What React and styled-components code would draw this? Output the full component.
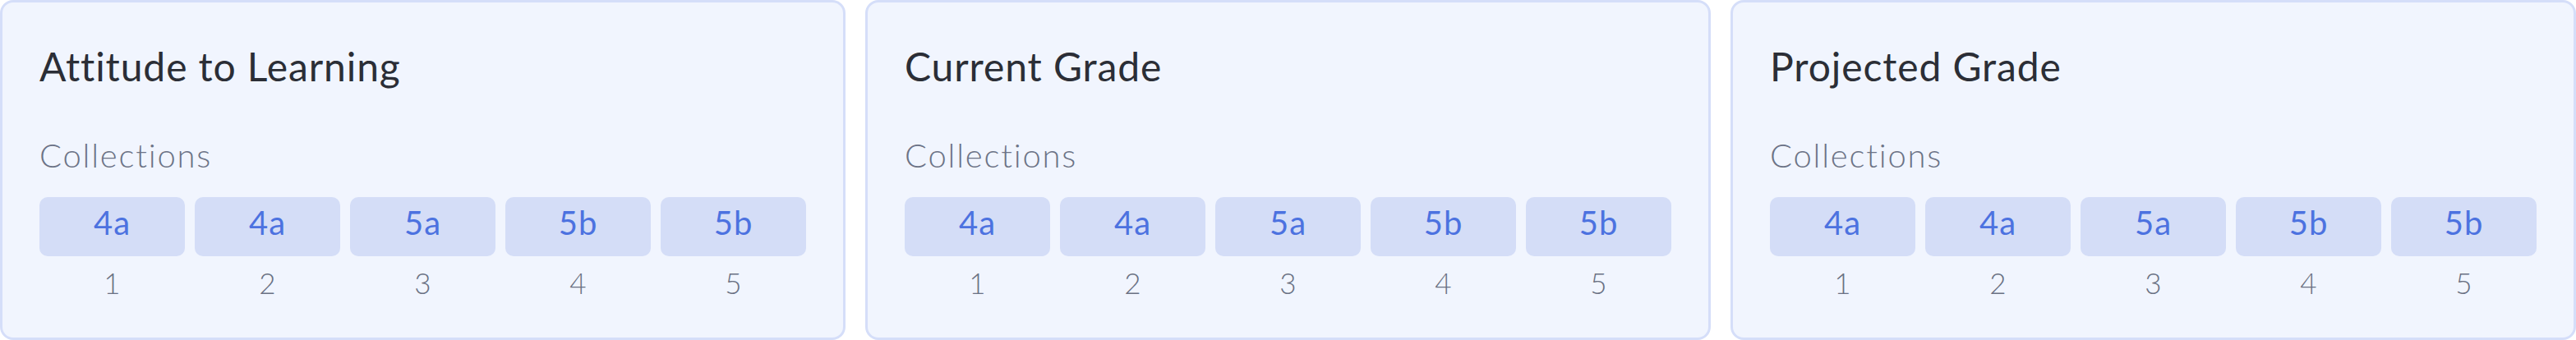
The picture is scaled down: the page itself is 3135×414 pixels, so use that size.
import styled, { createGlobalStyle } from "styled-components";

const GlobalStyle = createGlobalStyle`
  html, body {
    margin: 0;
    padding: 0;
    background: #ffffff;
  }
  body {
    font-family: Lato, "Open Sans", sans-serif;
  }
`;

const CardGrid = styled.div`
  display: grid;
  grid-template-columns: repeat(3, 1fr);
  gap: 24px;
`;

const Card = styled.section`
  height: 414px;
  box-sizing: border-box;
  padding: 49px 45px 47px;
  background: #f1f5fe;
  border: 3px solid #d5def9;
  border-radius: 16px;
`;

const Title = styled.h2`
  margin: 0;
  font-size: 48px;
  font-weight: 400;
  line-height: 1.2;
  letter-spacing: 0.9px;
  color: #2b2e36;
`;

const Label = styled.div`
  margin-top: 55px;
  font-size: 40px;
  font-weight: 300;
  line-height: 1.2;
  letter-spacing: 1.8px;
  color: #6c7386;
`;

const Collections = styled.div`
  display: grid;
  grid-template-columns: repeat(5, 1fr);
  gap: 12px;
  margin-top: 27px;
`;

const Collection = styled.div`
  display: flex;
  flex-direction: column;
  align-items: center;
`;

const Grade = styled.div`
  width: 100%;
  height: 72px;
  box-sizing: border-box;
  padding-bottom: 9px;
  border-radius: 10px;
  background: #d4ddf7;
  color: #4c72e0;
  font-size: 40px;
  line-height: 63px;
  letter-spacing: 1px;
  text-align: center;
`;

const Index = styled.div`
  margin-top: 11px;
  font-size: 35px;
  font-weight: 300;
  line-height: 1.2;
  color: #6a7183;
`;

const cards = [
  { title: "Attitude to Learning", grades: ["4a", "4a", "5a", "5b", "5b"] },
  { title: "Current Grade", grades: ["4a", "4a", "5a", "5b", "5b"] },
  { title: "Projected Grade", grades: ["4a", "4a", "5a", "5b", "5b"] },
];

export default function App() {
  return (
    <>
      <GlobalStyle />
      <CardGrid>
        {cards.map((card) => (
          <Card key={card.title}>
            <Title>{card.title}</Title>
            <Label>Collections</Label>
            <Collections>
              {card.grades.map((grade, i) => (
                <Collection key={i}>
                  <Grade>{grade}</Grade>
                  <Index>{i + 1}</Index>
                </Collection>
              ))}
            </Collections>
          </Card>
        ))}
      </CardGrid>
    </>
  );
}
